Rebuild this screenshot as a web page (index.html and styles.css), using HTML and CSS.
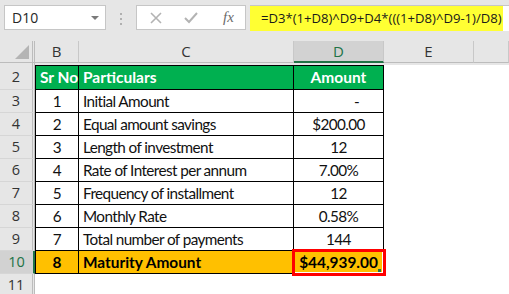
FILE: index.html
```html
<!DOCTYPE html>
<html lang="en">

<head>
  <meta charset="UTF-8">
  <meta name="viewport" content="width=device-width, initial-scale=1.0">
  <title>Maturity Amount</title>
  <link rel="stylesheet" href="styles.css">
</head>

<body>
  <header class="bar">
    <div class="namebox">
      <span>D10</span>
      <span class="caret"></span>
    </div>
    <div class="grip"><i></i><i></i><i></i></div>
    <div class="fxbtns">
      <svg class="ico-x" width="12" height="12" viewBox="0 0 12 12">
        <path d="M1 1 L11 11 M11 1 L1 11" stroke="#b3b3b3" stroke-width="1.6" fill="none" />
      </svg>
      <svg class="ico-ok" width="14" height="12" viewBox="0 0 14 12">
        <path d="M1 6 L5 10 L13 1" stroke="#b3b3b3" stroke-width="2" fill="none" />
      </svg>
      <span class="fx">fx</span>
    </div>
    <div class="formula">
      <span class="mark">=D3*(1+D8)^D9+D4*(((1+D8)^D9-1)/D8)</span>
    </div>
  </header>

  <main class="sheet">
    <div class="row head">
      <div class="rh corner"><span class="tri"></span></div>
      <div class="ch cb">B</div>
      <div class="ch cc">C</div>
      <div class="ch cd on">D</div>
      <div class="ch ce">E</div>
      <div class="ch cf"></div>
    </div>
    <div class="row strip">
      <div class="rh"></div>
      <div class="fill"></div>
    </div>

    <div class="row first">
      <div class="rh">2</div>
      <div class="c cb th mid">Sr No</div>
      <div class="c cc th">Particulars</div>
      <div class="c cd th mid">Amount</div>
    </div>
    <div class="row">
      <div class="rh">3</div>
      <div class="c cb mid">1</div>
      <div class="c cc">Initial Amount</div>
      <div class="c cd dash">-</div>
    </div>
    <div class="row">
      <div class="rh">4</div>
      <div class="c cb mid">2</div>
      <div class="c cc">Equal amount savings</div>
      <div class="c cd mid">$200.00</div>
    </div>
    <div class="row">
      <div class="rh">5</div>
      <div class="c cb mid">3</div>
      <div class="c cc">Length of investment</div>
      <div class="c cd mid">12</div>
    </div>
    <div class="row">
      <div class="rh">6</div>
      <div class="c cb mid">4</div>
      <div class="c cc">Rate of Interest per annum</div>
      <div class="c cd mid">7.00%</div>
    </div>
    <div class="row">
      <div class="rh">7</div>
      <div class="c cb mid">5</div>
      <div class="c cc">Frequency of installment</div>
      <div class="c cd mid">12</div>
    </div>
    <div class="row">
      <div class="rh">8</div>
      <div class="c cb mid">6</div>
      <div class="c cc">Monthly Rate</div>
      <div class="c cd mid">0.58%</div>
    </div>
    <div class="row">
      <div class="rh">9</div>
      <div class="c cb mid">7</div>
      <div class="c cc">Total number of payments</div>
      <div class="c cd mid">144</div>
    </div>
    <div class="row total">
      <div class="rh on">10</div>
      <div class="c cb mid">8</div>
      <div class="c cc">Maturity Amount</div>
      <div class="c cd mid picked">$44,939.00</div>
    </div>
    <div class="row">
      <div class="rh">11</div>
    </div>
  </main>
</body>

</html>
```

FILE: styles.css
```css
* {
  margin: 0;
  padding: 0;
  box-sizing: border-box;
}

body {
  width: 509px;
  height: 294px;
  overflow: hidden;
  background: #ffffff;
  font-family: "Open Sans", "Noto Sans", sans-serif;
  color: #222222;
}

/* formula bar */
.bar {
  display: flex;
  height: 41px;
  padding: 5px 0 0 4px;
  background: #e6e6e6;
}

.namebox {
  display: flex;
  align-items: center;
  justify-content: space-between;
  width: 102px;
  height: 25px;
  padding: 0 6px 0 7px;
  border: 1px solid #c6c6c6;
  background: #ffffff;
  font-size: 14px;
  color: #262626;
}

.caret {
  width: 0;
  height: 0;
  border-left: 4px solid transparent;
  border-right: 4px solid transparent;
  border-top: 4px solid #7a7a7a;
}

.grip {
  display: flex;
  flex-direction: column;
  align-items: center;
  gap: 3px;
  width: 30px;
  padding-top: 8px;
}

.grip i {
  display: block;
  width: 2px;
  height: 2px;
  background: #b0b0b0;
}

.fxbtns {
  display: flex;
  align-items: center;
  width: 110px;
  height: 25px;
  border: 1px solid #c6c6c6;
  background: #ffffff;
}

.ico-x {
  margin-left: 13px;
}

.ico-ok {
  margin-left: 22px;
}

.fx {
  margin-left: 25px;
  font-family: "Liberation Serif", serif;
  font-style: italic;
  font-size: 15px;
  color: #6b6b6b;
}

.formula {
  flex: 1;
  height: 26px;
  margin-left: 4px;
  border-top: 1px solid #c6c6c6;
  background: #ffffff;
}

.mark {
  display: block;
  width: 253px;
  height: 25px;
  padding-left: 11px;
  background: #ffff33;
  font-size: 13.1px;
  line-height: 25px;
  color: #1a1a1a;
  white-space: nowrap;
}

/* grid */
.row {
  display: flex;
  height: 23px;
}

.rh {
  width: 35px;
  flex: none;
  border-right: 3px double #bcbcbc;
  border-bottom: 1px solid #d6d6d6;
  background: #e6e6e6;
  font-size: 14.5px;
  line-height: 22px;
  text-align: center;
  color: #333333;
}

.rh.on {
  border-right: 2px solid #217346;
  background: #d2d2d2;
  color: #217346;
}

.head {
  height: 22px;
}

.head .rh,
.ch {
  border-bottom: 1px solid #bcbcbc;
  background: #e6e6e6;
}

.corner {
  position: relative;
}

.tri {
  position: absolute;
  left: 15px;
  top: 4px;
  width: 0;
  height: 0;
  border-left: 14px solid transparent;
  border-bottom: 14px solid #b4b4b4;
}

.ch {
  border-right: 1px solid #c8c8c8;
  font-size: 15px;
  line-height: 21px;
  text-align: center;
  color: #333333;
}

.ch.on {
  border-bottom: 2px solid #217346;
  background: #d2d2d2;
  color: #217346;
}

.cb {
  width: 44px;
}

.cc {
  width: 215px;
}

.cd {
  width: 90px;
}

.ce {
  width: 90px;
}

.cf {
  flex: 1;
}

.strip {
  height: 2px;
}

.strip .rh {
  border-bottom: none;
}

.strip .fill {
  flex: 1;
  background: #e6e6e6;
}

/* table cells */
.c {
  border-right: 1px solid #000000;
  border-bottom: 1px solid #000000;
  padding: 0 4px;
  font-family: "Lato", sans-serif;
  font-size: 15.3px;
  letter-spacing: -0.6px;
  line-height: 23px;
  white-space: nowrap;
  color: #111111;
}

.c.cb {
  border-left: 1px solid #000000;
}

.c.cd {
  padding: 0;
}

.first {
  height: 25px;
}

.first .c {
  border-top: 1px solid #000000;
}

.first .rh {
  line-height: 24px;
}

.mid {
  text-align: center;
}

.c.dash {
  padding-left: 60px;
}

.th {
  background: #00b050;
  color: #ffffff;
  font-size: 15.5px;
  font-weight: 700;
  letter-spacing: 0;
}

.total .c {
  background: #ffc000;
  font-size: 15.4px;
  font-weight: 700;
  letter-spacing: 0;
  color: #000000;
}

.picked {
  position: relative;
  outline: 3px solid #ff0000;
  outline-offset: -1px;
  box-shadow: inset 0 0 0 1px #ffffff;
}

.picked::after {
  content: "";
  position: absolute;
  right: 2px;
  bottom: 1px;
  width: 3px;
  height: 3px;
  background: #217346;
}
```
